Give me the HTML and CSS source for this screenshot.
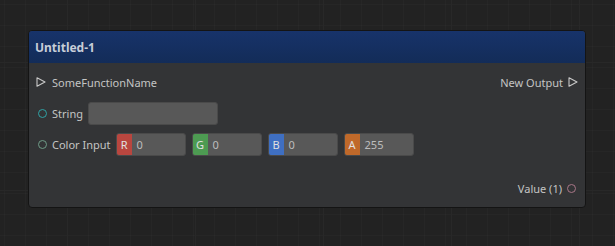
FILE: index.html
```html
<!DOCTYPE html>
<html lang="en">
<head>
    <meta charset="UTF-8">
    <title>Node Editor</title>
    <link rel="stylesheet" href="styles.css">
</head>
<body>
    <div class="canvas">
        <div class="node">
            <div class="node-header">Untitled-1</div>
            <div class="node-body">
                <div class="row exec-row">
                    <div class="port-left">
                        <svg class="exec" width="10" height="10" viewBox="0 0 10 10"><path d="M1 0.8 L9 5 L1 9.2 Z" fill="none" stroke="#c8c8c8" stroke-width="1.1" stroke-linejoin="round"/></svg>
                        <span>SomeFunctionName</span>
                    </div>
                    <div class="port-right">
                        <span>New Output</span>
                        <svg class="exec" width="10" height="10" viewBox="0 0 10 10"><path d="M1 0.8 L9 5 L1 9.2 Z" fill="none" stroke="#c8c8c8" stroke-width="1.1" stroke-linejoin="round"/></svg>
                    </div>
                </div>

                <div class="row input-row">
                    <span class="pin pin-string"></span>
                    <span class="label">String</span>
                    <div class="text-field"></div>
                </div>

                <div class="row input-row color-row">
                    <span class="pin pin-color"></span>
                    <span class="label">Color Input</span>
                    <div class="channels">
                        <div class="channel"><span class="tag tag-r">R</span><span class="val">0</span></div>
                        <div class="channel"><span class="tag tag-g">G</span><span class="val">0</span></div>
                        <div class="channel"><span class="tag tag-b">B</span><span class="val">0</span></div>
                        <div class="channel"><span class="tag tag-a">A</span><span class="val">255</span></div>
                    </div>
                </div>

                <div class="row output-row">
                    <span class="label">Value (1)</span>
                    <span class="pin pin-value"></span>
                </div>
            </div>
        </div>
    </div>
</body>
</html>
```

FILE: styles.css
```css
html, body {
    margin: 0;
    padding: 0;
}

body {
    width: 615px;
    height: 246px;
    overflow: hidden;
    font-family: "Noto Sans", "Open Sans", sans-serif;
    font-size: 11px;
    color: #c4c4c4;
    background-color: #222222;
}

.canvas {
    width: 615px;
    height: 246px;
    padding: 30px 0 0 28px;
    box-sizing: border-box;
    background-color: #222222;
    background-image:
        linear-gradient(to right, #282828 1px, transparent 1px),
        linear-gradient(to bottom, #282828 1px, transparent 1px),
        linear-gradient(to right, rgba(255, 255, 255, 0.02) 1px, transparent 1px),
        linear-gradient(to bottom, rgba(255, 255, 255, 0.02) 1px, transparent 1px);
    background-size: 128px 128px, 128px 128px, 21px 21px, 21px 21px;
    background-position: 67px 62px, 67px 62px, 4px 0, 0 4px;
}

.node {
    width: 558px;
    height: 178px;
    box-sizing: border-box;
    background-color: #333436;
    border: 1px solid #141414;
    border-radius: 4px;
    overflow: hidden;
    display: flex;
    flex-direction: column;
}

.node-header {
    height: 32px;
    flex-shrink: 0;
    display: flex;
    align-items: center;
    padding-left: 6px;
    background: linear-gradient(to bottom, #17336a, #132c58);
    color: #c7cdd8;
    font-size: 12px;
    font-weight: bold;
}

.node-body {
    flex: 1;
    display: flex;
    flex-direction: column;
    padding: 9px 7px 9px 7px;
}

.row {
    display: flex;
    align-items: center;
}

.exec-row {
    height: 20px;
    justify-content: space-between;
}

.port-left, .port-right {
    display: flex;
    align-items: center;
    gap: 6px;
}

.port-right {
    gap: 5px;
}

.exec {
    display: block;
}

.input-row {
    height: 23px;
    padding-left: 2px;
    margin-top: 10px;
}

.color-row {
    margin-top: 8px;
}

.pin {
    width: 7px;
    height: 7px;
    border-radius: 50%;
    border: 1.5px solid;
    flex-shrink: 0;
}

.pin-string {
    border-color: #2fa3a6;
}

.pin-color {
    border-color: #6f9c88;
}

.pin-value {
    border-color: #a97688;
}

.label {
    margin-left: 5px;
}

.text-field {
    width: 128px;
    height: 21px;
    margin-left: 5px;
    background-color: #585858;
    border: 1px solid #4a4a4a;
    border-radius: 3px;
}

.channels {
    display: flex;
    gap: 6px;
    margin-left: 5px;
}

.channel {
    width: 70px;
    height: 23px;
    box-sizing: border-box;
    display: flex;
    background-color: #585858;
    border: 1px solid #4a4a4a;
    border-radius: 3px;
    overflow: hidden;
}

.tag {
    width: 15px;
    display: flex;
    align-items: center;
    justify-content: center;
    color: #e0e0e0;
}

.tag-r { background-color: #b9463f; }
.tag-g { background-color: #4d9b52; }
.tag-b { background-color: #3f6fc2; }
.tag-a { background-color: #c0692a; }

.val {
    display: flex;
    align-items: center;
    padding-left: 5px;
    color: #bdbdbd;
}

.output-row {
    margin-top: auto;
    height: 20px;
    justify-content: flex-end;
    padding-right: 2px;
}

.output-row .label {
    margin-right: 5px;
}
```
